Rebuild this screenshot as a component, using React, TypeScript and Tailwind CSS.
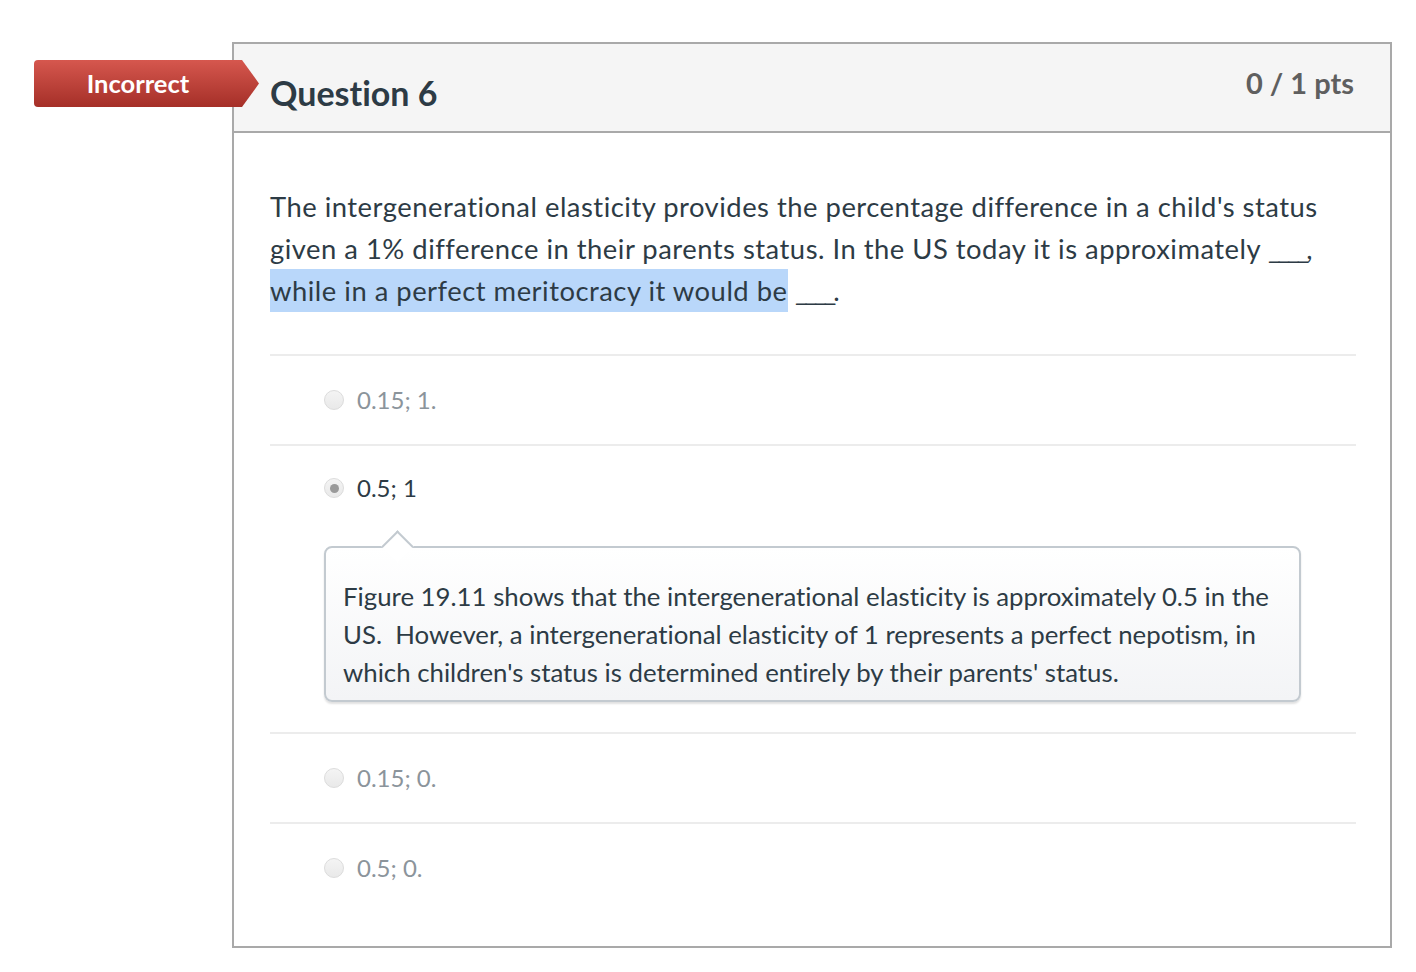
import React from 'react'

const answers = [
  { text: '0.15; 1.', selected: false },
  { text: '0.5; 1', selected: true, comment: true },
  { text: '0.15; 0.', selected: false },
  { text: '0.5; 0.', selected: false },
]

function Radio({ checked }: { checked: boolean }) {
  return (
    <span className="flex h-[20px] w-[20px] shrink-0 items-center justify-center rounded-full border border-[#dcdcdc] bg-gradient-to-b from-[#f4f4f4] to-[#e9e9e9]">
      {checked && <span className="h-[9px] w-[9px] rounded-full bg-[#9a9a9a]" />}
    </span>
  )
}

function Blank() {
  return <span className="tracking-[-3px]">____</span>
}

export default function App() {
  return (
    <div className="relative h-[972px] w-[1416px] bg-white font-['Lato','Noto_Sans',sans-serif] text-[#2d3b45] [font-variant-ligatures:none]">
      <div className="absolute left-[34px] top-[60px] flex h-[47px] w-[225px] items-center rounded-l-[4px] bg-gradient-to-b from-[#d6574e] to-[#a52f28] pr-[17px] [clip-path:polygon(0_0,calc(100%-17px)_0,100%_50%,calc(100%-17px)_100%,0_100%)]">
        <span className="w-full text-center text-[25.5px] font-bold leading-none text-white">Incorrect</span>
      </div>

      <div className="ml-[232px] pt-[42px]">
        <div className="w-[1160px] border-2 border-[#a9a9a9]">
          <div className="flex h-[89px] justify-between border-b-2 border-[#a9a9a9] bg-[#f5f5f5] px-[36px]">
            <h2 className="mt-[32px] text-[34px] font-bold leading-none text-[#2d3b45]">Question 6</h2>
            <div className="mt-[24px] text-[29px] font-bold leading-none text-[#5f5f5f]">0 / 1 pts</div>
          </div>

          <div className="pb-[34px] pl-[36px] pr-[34px] pt-[53px]">
            <p className="text-[27.4px] leading-[42px] tracking-[0.5px]">
              The intergenerational elasticity provides the percentage difference in a child's status
              <br />
              given a 1% difference in their parents status. In the US today it is approximately <Blank />,
              <br />
              <span className="bg-[#b9d7fa] py-[5px]">while in a perfect meritocracy it would be</span> <Blank />.
            </p>

            <div className="mt-[42px]">
              {answers.map((a) => (
                <div key={a.text} className="border-t-2 border-[#ececec] pb-[28px] pt-[28px]">
                  <div className={`flex items-center pl-[54px] ${a.comment ? '-mt-[2px]' : ''}`}>
                    <Radio checked={a.selected} />
                    <span
                      className={`ml-[13px] text-[24px] leading-[32px] ${a.selected ? 'text-[#2d3b45]' : 'text-[#8b949b]'}`}
                    >
                      {a.text}
                    </span>
                  </div>
                  {a.comment && (
                    <div className="relative ml-[54px] mr-[55px] mt-[42px] mb-[2px] rounded-[8px] border-2 border-[#c3cad0] bg-gradient-to-b from-white to-[#f3f4f6] pb-[9px] pl-[17px] pr-[18px] pt-[29px] shadow-[0_2px_2px_rgba(0,0,0,0.12)]">
                      <span className="absolute left-[60px] top-[-13px] h-[23px] w-[23px] rotate-45 border-l-2 border-t-2 border-[#c3cad0] bg-white" />
                      <p className="relative text-[25.8px] leading-[38px]">
                        Figure 19.11 shows that the intergenerational elasticity is approximately 0.5 in the
                        <br />
                        US.&nbsp; However, a intergenerational elasticity of 1 represents a perfect nepotism, in
                        <br />
                        which children's status is determined entirely by their parents' status.
                      </p>
                    </div>
                  )}
                </div>
              ))}
            </div>
          </div>
        </div>
      </div>
    </div>
  )
}
